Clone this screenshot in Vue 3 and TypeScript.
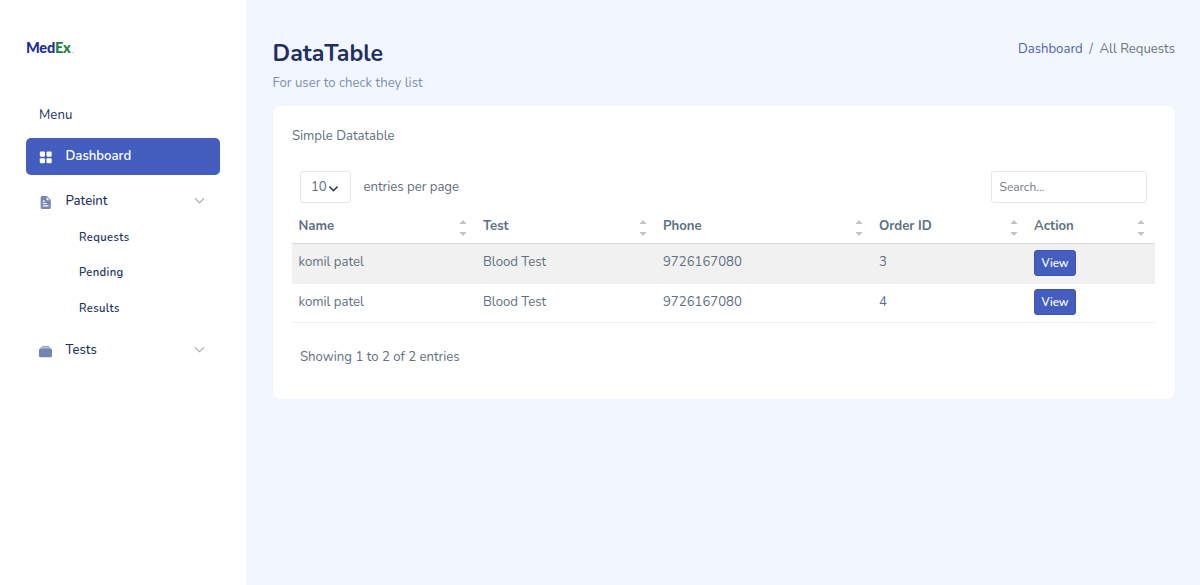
<template>
  <div class="app">
    <aside class="sidebar">
      <a class="logo" href="#"><span class="logo-med">Med</span><span class="logo-ex">Ex</span><span class="logo-dot">.</span></a>

      <div class="menu-title">Menu</div>
      <nav class="menu">
        <a class="menu-link active" href="#">
          <svg class="menu-icon" viewBox="0 0 16 16" fill="currentColor">
            <rect x="1" y="0.6" width="6.4" height="6.4" rx="1.4" />
            <rect x="9.2" y="0.6" width="6.4" height="6.4" rx="1.4" />
            <rect x="1" y="8.8" width="6.4" height="6.4" rx="1.4" />
            <rect x="9.2" y="8.8" width="6.4" height="6.4" rx="1.4" />
          </svg>
          <span>Dashboard</span>
        </a>

        <a class="menu-link" href="#">
          <svg class="menu-icon" viewBox="0 0 16 16" fill="currentColor" fill-rule="evenodd">
            <path d="M9.500 0H4a2 2 0 0 0-2 2v12a2 2 0 0 0 2 2h8.500a2 2 0 0 0 2-2V5zM9.300 1.600v3.600h3.600zM4.600 5.500h2.800v1.700H4.600zM4.600 8.600h5v1.300h-5zM4.600 11.400h7.200v1.500H4.600z" />
          </svg>
          <span>Pateint</span>
          <svg class="chevron" viewBox="0 0 12 8"><path d="M1.200 1.200 6 6 10.800 1.200" /></svg>
        </a>
        <ul class="submenu">
          <li v-for="item in submenu" :key="item"><a href="#">{{ item }}</a></li>
        </ul>

        <a class="menu-link" href="#">
          <svg class="menu-icon" viewBox="0 0 16 16" fill="currentColor">
            <path d="M0 6.200A1.500 1.500 0 0 1 1.500 4.700h13A1.500 1.500 0 0 1 16 6.200v7.300a1.500 1.500 0 0 1-1.500 1.500h-13A1.500 1.500 0 0 1 0 13.500zM2 4.200a.6.6 0 0 1 0-1.200h12a.6.6 0 0 1 0 1.200zM4 2.300a.5.5 0 0 1 0-1h8a.5.5 0 0 1 0 1z" />
          </svg>
          <span>Tests</span>
          <svg class="chevron" viewBox="0 0 12 8"><path d="M1.200 1.200 6 6 10.800 1.200" /></svg>
        </a>
      </nav>
    </aside>

    <main class="main">
      <header class="page-header">
        <div>
          <h3>DataTable</h3>
          <p class="subtitle">For user to check they list</p>
        </div>
        <nav class="breadcrumb">
          <a href="#">Dashboard</a>
          <span class="separator">/</span>
          <span class="current">All Requests</span>
        </nav>
      </header>

      <section class="card">
        <div class="card-header">Simple Datatable</div>

        <div class="table-top">
          <button class="selector" type="button">
            <span>{{ perPage }}</span>
            <svg viewBox="0 0 16 16"><path d="m2 5 6 6 6-6" /></svg>
          </button>
          <span class="per-page">entries per page</span>
          <input v-model="query" class="search" type="text" placeholder="Search..." />
        </div>

        <table>
          <colgroup>
            <col v-for="col in columns" :key="col.label" :class="col.size" />
          </colgroup>
          <thead>
            <tr>
              <th v-for="col in columns" :key="col.label">
                <div class="sorter">
                  <span>{{ col.label }}</span>
                  <svg viewBox="0 0 8 18"><path d="M4 1 7.600 5H.4zM4 17 .4 13h7.200z" /></svg>
                </div>
              </th>
            </tr>
          </thead>
          <tbody>
            <tr v-for="row in rows" :key="row.orderId">
              <td>{{ row.name }}</td>
              <td>{{ row.test }}</td>
              <td>{{ row.phone }}</td>
              <td>{{ row.orderId }}</td>
              <td class="action"><button class="btn" type="button">View</button></td>
            </tr>
          </tbody>
        </table>

        <div class="info">Showing 1 to {{ rows.length }} of {{ requests.length }} entries</div>
      </section>
    </main>
  </div>
</template>

<script setup lang="ts">
import { computed, ref } from 'vue'

interface LabRequest {
  name: string
  test: string
  phone: string
  orderId: number
}

const submenu = ['Requests', 'Pending', 'Results']

const columns = [
  { label: 'Name', size: 'col-name' },
  { label: 'Test', size: 'col-test' },
  { label: 'Phone', size: 'col-phone' },
  { label: 'Order ID', size: 'col-order' },
  { label: 'Action', size: 'col-action' }
]

const requests: LabRequest[] = [
  { name: 'komil patel', test: 'Blood Test', phone: '9726167080', orderId: 3 },
  { name: 'komil patel', test: 'Blood Test', phone: '9726167080', orderId: 4 }
]

const perPage = ref(10)
const query = ref('')

const rows = computed(() => {
  const q = query.value.toLowerCase()
  return requests
    .filter((r) => `${r.name} ${r.test} ${r.phone} ${r.orderId}`.toLowerCase().includes(q))
    .slice(0, perPage.value)
})
</script>

<style>
body {
  margin: 0;
  background: #f2f7ff;
}
</style>

<style scoped>
.app {
  display: flex;
  min-height: 585px;
  font-family: Nunito, Lato, 'Noto Sans', sans-serif;
  font-size: 13.15px;
  line-height: 20px;
  color: #607080;
}

.app * {
  box-sizing: border-box;
}

a {
  color: inherit;
  text-decoration: none;
}

.sidebar {
  width: 246px;
  flex: none;
  padding: 38px 26px 0;
  background: #fff;
  color: #22315f;
}

.logo {
  display: block;
  height: 20px;
  font-family: Lato, sans-serif;
  font-size: 14.5px;
  font-weight: 900;
  letter-spacing: -0.2px;
}

.logo-med {
  color: #1a2f9e;
}

.logo-ex {
  color: #23803f;
}

.logo-dot {
  margin-left: 1px;
  font-size: 8px;
  font-weight: 400;
  color: #8a9a90;
}

.menu-title {
  margin: 46px 0 14px 13px;
  padding-top: 1px;
  height: 20px;
  letter-spacing: 0.1px;
}

.menu-link {
  display: flex;
  align-items: center;
  height: 37px;
  padding: 0 15px 0 13px;
  border-radius: 5px;
  font-weight: 500;
}

.menu-link span {
  margin-bottom: 1px;
}

.menu-link + .menu-link {
  margin-top: 8px;
}

.menu-link.active {
  background: #435ebe;
  color: #fff;
  font-weight: 600;
}

.menu-icon {
  width: 13px;
  height: 13px;
  margin: 2px 13.5px 0 0;
  color: #7484b3;
}

.active .menu-icon {
  color: #fff;
}

.chevron {
  width: 11px;
  height: 8px;
  margin: 0 0 2px auto;
  fill: none;
  stroke: #a0a5ad;
  stroke-width: 1.2;
}

.submenu {
  margin: 0;
  padding: 0 0 6px 53px;
  list-style: none;
  font-size: 11.2px;
  font-weight: 600;
  letter-spacing: 0.4px;
}

.submenu li {
  height: 35.4px;
  line-height: 35px;
}

.main {
  flex: 1;
  padding: 38px 25px 0 26.6px;
}

.page-header {
  display: flex;
  justify-content: space-between;
  height: 68px;
}

h3 {
  margin: 0;
  padding-top: 1px;
  font-size: 23.1px;
  line-height: 29px;
  font-weight: 700;
  color: #1f2f62;
}

.subtitle {
  margin: 5px 0 0;
  color: #7f8cb0;
}

.breadcrumb {
  display: flex;
  gap: 6.5px;
  padding-top: 1px;
}

.breadcrumb a {
  color: #4d62ad;
}

.separator,
.current {
  color: #6c757d;
}

.card {
  height: 293px;
  padding: 20px 20px 0 19.4px;
  border-radius: 8px;
  background: #fff;
}

.table-top {
  display: flex;
  align-items: center;
  height: 32px;
  margin: 25px 8.5px 0 8px;
}

.selector {
  display: flex;
  align-items: center;
  gap: 1px;
  width: 51.5px;
  height: 32px;
  padding: 0 0 0 10px;
  border: 1px solid #e3e7ec;
  border-radius: 3px;
  background: #fff;
  font: inherit;
  color: #607080;
}

.selector svg {
  width: 11px;
  height: 11px;
  margin-top: 2px;
  fill: none;
  stroke: #343a40;
  stroke-width: 2.2;
}

.per-page {
  margin-left: 12px;
}

.search {
  width: 156px;
  height: 32px;
  margin-left: auto;
  padding: 0 8px;
  border: 1px solid #e3e7ec;
  border-radius: 3px;
  font: inherit;
  font-size: 12px;
  color: #607080;
}

.search::placeholder {
  color: #757c84;
}

table {
  width: 863px;
  margin-top: 6px;
  border-collapse: separate;
  border-spacing: 0;
  table-layout: fixed;
}

.col-name {
  width: 184.5px;
}

.col-test {
  width: 180px;
}

.col-phone {
  width: 216px;
}

.col-order {
  width: 155px;
}

th {
  height: 35px;
  padding: 0 9.5px 0 6.5px;
  border-bottom: 1px solid #d5d8dc;
  text-align: left;
  font-weight: 700;
}

.sorter {
  display: flex;
  align-items: center;
  justify-content: space-between;
}

.sorter svg {
  width: 8px;
  height: 18px;
  margin-top: 3px;
  fill: #c0c4c9;
}

td {
  height: 39.5px;
  padding: 0 6.5px 2px;
  border-bottom: 1px solid #eceef0;
}

tbody tr:nth-child(odd) td {
  background: #f1f1f1;
}

td.action {
  padding: 0 6.5px 1px;
}

.btn {
  display: block;
  width: 42px;
  height: 26px;
  padding: 0;
  border: 1px solid #3d56b0;
  border-radius: 3px;
  background: #435ebe;
  font: inherit;
  font-size: 11.5px;
  font-weight: 600;
  color: #fff;
}

.info {
  margin: 24px 0 0 8px;
}
</style>
